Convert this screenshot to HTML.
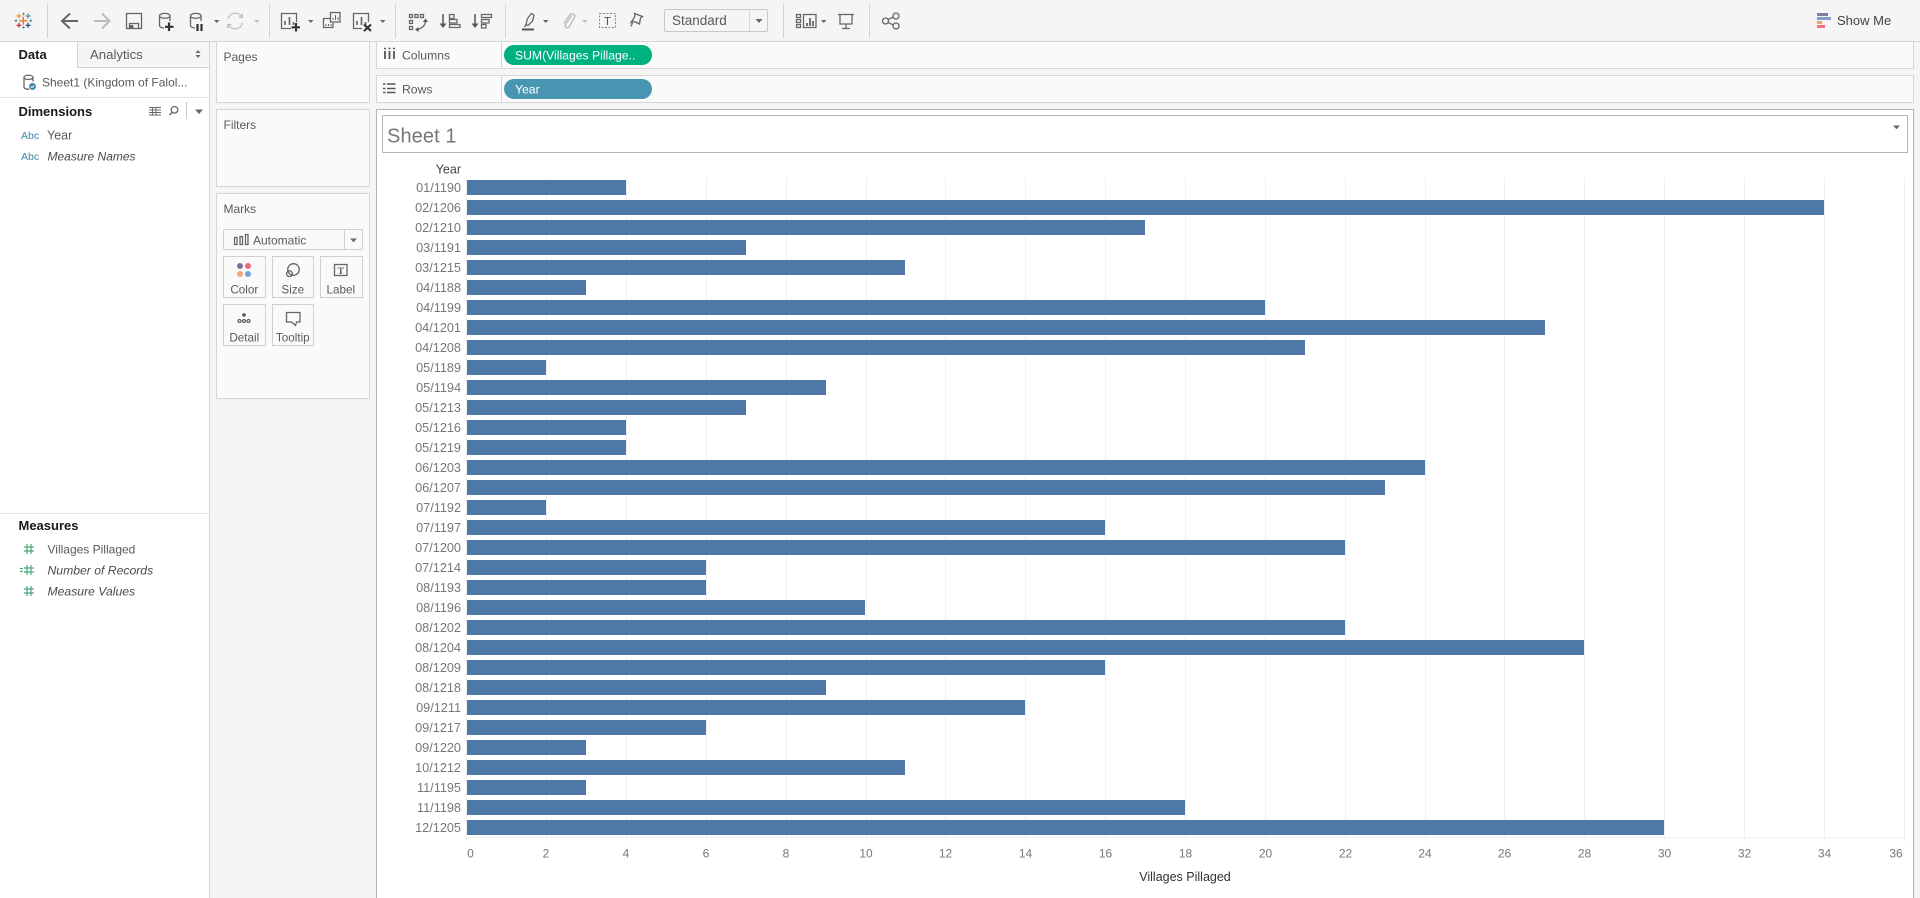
<!DOCTYPE html>
<html><head><meta charset="utf-8"><title>Sheet 1</title>
<style>
html,body{margin:0;padding:0;background:#f5f5f5;overflow:hidden}
svg{display:block;position:absolute;left:0;top:0}
text{font-family:"Liberation Sans",sans-serif;font-size:12.2px;fill:#5a5a5a}
.r{text-anchor:end;fill:#777;font-size:12.7px}
.m{text-anchor:middle}
.a{text-anchor:middle;fill:#777;font-size:12px}
.i{font-style:italic;fill:#4a4a4a}
.b{font-weight:bold;fill:#1a1a1a}
.abc{font-size:10.5px;fill:#3f87a5}
.w{fill:#fff}
.ic{fill:none;stroke:#666;stroke-width:1.3}
.lt{fill:none;stroke:#bbb;stroke-width:1.3}
.card{fill:#fafafa;stroke:#d6d6d6}
.bar rect{fill:#4e79a7}
</style></head><body>
<svg width="1920" height="898" viewBox="0 0 1920 898" xmlns="http://www.w3.org/2000/svg">
<rect width="1920" height="898" fill="#f5f5f5"/>
<!-- left panel -->
<rect x="0" y="41" width="209" height="857" fill="#fff"/>
<path d="M0 41.5H1920" stroke="#d4d4d4"/>
<path d="M209.5 41V898" stroke="#d4d4d4"/>
<rect x="78" y="42" width="131" height="25" fill="#f5f5f5"/>
<path d="M77.5 41V67.5H209" stroke="#d4d4d4" fill="none"/>
<path d="M0 97.5H209M0 513.5H209" stroke="#e2e2e2"/>
<text x="18.500" y="59" class="b" style="font-size:13px">Data</text>
<text x="90" y="59" style="font-size:13.200px">Analytics</text>
<path d="M195.500 53l2.500-3 2.500 3zM195.500 55l2.500 3 2.500-3z" fill="#666"/>
<!-- data source -->
<path class="ic" d="M24 77.500c0-3 9-3 9 0v4M24 77.500c0 2.500 9 2.500 9 0M24 77.500V87c0 1.500 2.500 2.300 5 2.300"/>
<circle cx="32.500" cy="86.500" r="3.500" fill="#3f87a5"/>
<path d="M30.800 86.500l1.200 1.200 2-2.200" stroke="#fff" fill="none"/>
<text x="42" y="86.500" style="font-size:12px">Sheet1 (Kingdom of Falol...</text>
<!-- dimensions -->
<text x="18.500" y="116" class="b" style="font-size:13px">Dimensions</text>
<path d="M149 107.500h12M149 110h12M149 112.500h12M149 115h12M152.500 107v8.500M156 107v8.500" stroke="#666" stroke-width="0.900" fill="none"/>
<circle cx="174.500" cy="109.800" r="3.300" class="ic" stroke-width="1"/><path d="M172 112.500l-2.500 2.500" class="ic"/>
<path d="M186.500 102v17" stroke="#ccc"/>
<path d="M195 109.500h8l-4 4.500z" fill="#666"/>
<text x="21" y="139" class="abc">Abc</text>
<text x="47" y="139.500" style="font-size:12.500px">Year</text>
<text x="21" y="160" class="abc">Abc</text>
<text x="47.500" y="160.500" class="i" style="font-size:12px">Measure Names</text>
<!-- measures -->
<text x="18.500" y="530" class="b" style="font-size:13px">Measures</text>
<g stroke="#4ea77e" stroke-width="1.200" fill="none">
<path d="M27 544v10M31 544v10M24 547h10M24 551h10"/>
<path d="M27 565v10M31 565v10M24 568h10M24 572h10M20 568.500h3M20 571.500h3"/>
<path d="M27 586v10M31 586v10M24 589h10M24 593h10"/>
</g>
<text x="47.500" y="553.500" style="font-size:12px">Villages Pillaged</text>
<text x="47.500" y="574.500" class="i">Number of Records</text>
<text x="47.500" y="595.500" class="i">Measure Values</text>
<!-- cards -->
<rect class="card" x="216.500" y="41.500" width="153" height="61"/>
<rect class="card" x="216.500" y="109.500" width="153" height="77"/>
<rect class="card" x="216.500" y="193.500" width="153" height="205"/>
<text x="223.500" y="61" style="font-size:12px">Pages</text>
<text x="223.500" y="129" style="font-size:12px">Filters</text>
<text x="223.500" y="213" style="font-size:12px">Marks</text>
<!-- marks -->
<rect x="223.500" y="229.500" width="139" height="20" rx="1.500" fill="#fafafa" stroke="#d0d0d0"/>
<path d="M344.500 230v19" stroke="#d0d0d0"/>
<path class="ic" d="M234.500 237.500h2.500v7h-2.500zM240 236.500h2.500v8H240zM245.500 234.500h2.500v10h-2.500z" stroke-width="1"/>
<text x="253" y="244.500" style="font-size:12px">Automatic</text>
<path d="M350 238.500h7l-3.500 3.800z" fill="#666"/>
<g fill="#fafafa" stroke="#d0d0d0">
<rect x="223.500" y="256.500" width="42" height="41"/><rect x="272.500" y="256.500" width="41" height="41"/><rect x="320.500" y="256.500" width="42" height="41"/>
<rect x="223.500" y="304.500" width="42" height="41"/><rect x="272.500" y="304.500" width="41" height="41"/>
</g>
<circle cx="240" cy="266" r="3" fill="#84709c"/><circle cx="248" cy="266" r="3" fill="#f0687c"/>
<circle cx="240" cy="274" r="3" fill="#f0a77a"/><circle cx="248" cy="274" r="3" fill="#7a9fd0"/>
<circle cx="293.500" cy="269.500" r="5.800" class="ic" stroke-width="1"/><circle cx="289.500" cy="273.700" r="2.900" class="ic" fill="#fafafa" stroke-width="1"/>
<rect x="334.500" y="264.500" width="12.500" height="11" class="ic" stroke-width="1"/>
<text x="340.800" y="274" class="m" style="font-size:9.500px;font-family:'Liberation Serif',serif;font-weight:bold">T</text>
<text x="244.300" y="293.500" class="m" style="font-size:11.700px">Color</text>
<text x="292.800" y="293.500" class="m" style="font-size:11.700px">Size</text>
<text x="340.800" y="293.500" class="m" style="font-size:11.700px">Label</text>
<circle cx="244" cy="315" r="1.800" fill="#555"/>
<g class="ic" stroke-width="0.900"><circle cx="239.500" cy="321" r="1.500"/><circle cx="244" cy="321" r="1.500"/><circle cx="248.500" cy="321" r="1.500"/></g>
<path class="ic" stroke-width="1" d="M286.500 312.500h13.500v9.500h-3.500l-1 3.500-4-3.500h-5z"/>
<text x="244.300" y="341.500" class="m" style="font-size:11.700px">Detail</text>
<text x="292.800" y="341.500" class="m" style="font-size:11.700px">Tooltip</text>
<!-- shelves -->
<rect class="card" x="376.500" y="41.500" width="1537" height="27"/>
<rect class="card" x="376.500" y="75.500" width="1537" height="27"/>
<path d="M501.500 42v26M501.500 76v26" stroke="#d6d6d6"/>
<path d="M385 51v8M389.500 51v8M394 51v8" stroke="#555" stroke-width="1.800"/>
<path d="M384 48.500h2M388.500 48.500h2M393 48.500h2" stroke="#555" stroke-width="1.500"/>
<path d="M383 84h2.500M383 88.500h2.500M383 92.500h2.500M387 84h8.500M387 88.500h8.500M387 92.500h8.500" stroke="#555" stroke-width="1.400"/>
<text x="402" y="59.500">Columns</text>
<text x="402" y="93.500">Rows</text>
<rect x="504" y="45" width="148" height="20" rx="10" fill="#00b180"/>
<rect x="504" y="79" width="148" height="20" rx="10" fill="#4996b2"/>
<text x="515" y="59.500" class="w" style="font-size:12.200px">SUM(Villages Pillage..</text>
<text x="515" y="93.500" class="w" style="font-size:12.200px">Year</text>
<!-- viz -->
<rect x="376.500" y="109.500" width="1537" height="800" fill="#fff" stroke="#b4b4b4"/>
<rect x="382.500" y="115.500" width="1525" height="37" fill="#fff" stroke="#b4b4b4"/>
<text x="387" y="142.500" style="font-size:20px;fill:#777;letter-spacing:.1px">Sheet 1</text>
<path d="M1893 125.500h7l-3.500 3.800z" fill="#666"/>
<text x="461" y="173.500" class="r" style="fill:#444;font-size:12.500px">Year</text>
<!-- grid -->
<path d="M466.500 177V841M546.500 177V841M626.500 177V841M706.500 177V841M786.500 177V841M866.500 177V841M945.500 177V841M1025.500 177V841M1105.500 177V841M1185.500 177V841M1265.500 177V841M1345.500 177V841M1425.500 177V841M1504.500 177V841M1584.500 177V841M1664.500 177V841M1744.500 177V841M1824.500 177V841M1904.500 177V841" stroke="#f0f0f0" fill="none"/>
<path d="M466 837.500H1905" stroke="#f0f0f0"/>
<g class="bar">
<rect x="467" y="180" width="159" height="15"/><rect x="467" y="200" width="1357" height="15"/><rect x="467" y="220" width="678" height="15"/><rect x="467" y="240" width="279" height="15"/><rect x="467" y="260" width="438" height="15"/><rect x="467" y="280" width="119" height="15"/><rect x="467" y="300" width="798" height="15"/><rect x="467" y="320" width="1078" height="15"/><rect x="467" y="340" width="838" height="15"/><rect x="467" y="360" width="79" height="15"/><rect x="467" y="380" width="359" height="15"/><rect x="467" y="400" width="279" height="15"/><rect x="467" y="420" width="159" height="15"/><rect x="467" y="440" width="159" height="15"/><rect x="467" y="460" width="958" height="15"/><rect x="467" y="480" width="918" height="15"/><rect x="467" y="500" width="79" height="15"/><rect x="467" y="520" width="638" height="15"/><rect x="467" y="540" width="878" height="15"/><rect x="467" y="560" width="239" height="15"/><rect x="467" y="580" width="239" height="15"/><rect x="467" y="600" width="398" height="15"/><rect x="467" y="620" width="878" height="15"/><rect x="467" y="640" width="1117" height="15"/><rect x="467" y="660" width="638" height="15"/><rect x="467" y="680" width="359" height="15"/><rect x="467" y="700" width="558" height="15"/><rect x="467" y="720" width="239" height="15"/><rect x="467" y="740" width="119" height="15"/><rect x="467" y="760" width="438" height="15"/><rect x="467" y="780" width="119" height="15"/><rect x="467" y="800" width="718" height="15"/><rect x="467" y="820" width="1197" height="15"/>
</g>
<g>
<text x="461" y="192" class="r">01/1190</text><text x="461" y="212" class="r">02/1206</text><text x="461" y="232" class="r">02/1210</text><text x="461" y="252" class="r">03/1191</text><text x="461" y="272" class="r">03/1215</text><text x="461" y="292" class="r">04/1188</text><text x="461" y="312" class="r">04/1199</text><text x="461" y="332" class="r">04/1201</text><text x="461" y="352" class="r">04/1208</text><text x="461" y="372" class="r">05/1189</text><text x="461" y="392" class="r">05/1194</text><text x="461" y="412" class="r">05/1213</text><text x="461" y="432" class="r">05/1216</text><text x="461" y="452" class="r">05/1219</text><text x="461" y="472" class="r">06/1203</text><text x="461" y="492" class="r">06/1207</text><text x="461" y="512" class="r">07/1192</text><text x="461" y="532" class="r">07/1197</text><text x="461" y="552" class="r">07/1200</text><text x="461" y="572" class="r">07/1214</text><text x="461" y="592" class="r">08/1193</text><text x="461" y="612" class="r">08/1196</text><text x="461" y="632" class="r">08/1202</text><text x="461" y="652" class="r">08/1204</text><text x="461" y="672" class="r">08/1209</text><text x="461" y="692" class="r">08/1218</text><text x="461" y="712" class="r">09/1211</text><text x="461" y="732" class="r">09/1217</text><text x="461" y="752" class="r">09/1220</text><text x="461" y="772" class="r">10/1212</text><text x="461" y="792" class="r">11/1195</text><text x="461" y="812" class="r">11/1198</text><text x="461" y="832" class="r">12/1205</text>
</g>
<g>
<text x="470.500" y="857.500" class="a">0</text><text x="546" y="857.500" class="a">2</text><text x="626" y="857.500" class="a">4</text><text x="706" y="857.500" class="a">6</text><text x="786" y="857.500" class="a">8</text><text x="866" y="857.500" class="a">10</text><text x="945.500" y="857.500" class="a">12</text><text x="1025.500" y="857.500" class="a">14</text><text x="1105.500" y="857.500" class="a">16</text><text x="1185.500" y="857.500" class="a">18</text><text x="1265.500" y="857.500" class="a">20</text><text x="1345.500" y="857.500" class="a">22</text><text x="1425" y="857.500" class="a">24</text><text x="1504.500" y="857.500" class="a">26</text><text x="1584.500" y="857.500" class="a">28</text><text x="1664.500" y="857.500" class="a">30</text><text x="1744.500" y="857.500" class="a">32</text><text x="1824.500" y="857.500" class="a">34</text><text x="1896" y="857.500" class="a">36</text>
</g>
<text x="1185" y="881" class="m" style="font-size:12.500px;fill:#333">Villages Pillaged</text>
<!-- toolbar separators -->
<path d="M47.500 4V38M269.500 4V38M395.500 4V38M505.500 4V38M783.500 4V38M869.500 4V38" stroke="#d4d4d4"/>
<!-- logo -->
<g fill="none">
<path d="M23.300 16.800v8M19.300 20.800h8" stroke="#e8762b" stroke-width="1.400"/>
<path d="M19 13.500v5M16.500 16h5" stroke="#f28e2b" stroke-width="1.200"/>
<path d="M28 13.500v5M25.500 16h5" stroke="#5b879b" stroke-width="1.200"/>
<path d="M19 22.800v5M16.500 25.300h5" stroke="#c72037" stroke-width="1.200"/>
<path d="M28 22.800v5M25.500 25.300h5" stroke="#1f447e" stroke-width="1.200"/>
<path d="M23.500 12.500v3M22 14h3" stroke="#7099a6"/>
<path d="M23.500 26v3M22 27.500h3" stroke="#7099a6"/>
<path d="M16 19.300v3M14.500 20.800h3" stroke="#59879b"/>
<path d="M30.800 19.300v3M29.300 20.800h3" stroke="#59879b"/>
</g>
<!-- back / forward -->
<path d="M62 21H78M70 13.500L62 21l8 7.500" fill="none" stroke="#666" stroke-width="2"/>
<path d="M94 21H110M102 13.500l7.500 7.500-7.500 7.500" fill="none" stroke="#bbb" stroke-width="2"/>
<!-- save -->
<rect x="126.500" y="13.500" width="15" height="15" class="ic"/>
<path d="M129.500 28.500v-5h9v5" class="ic"/><rect x="130" y="25" width="3.500" height="3.500" fill="#666"/>
<!-- new data source -->
<path class="ic" d="M159.500 16c0-3.500 10.500-3.500 10.500 0v5M159.500 16c0 3 10.500 3 10.500 0M159.500 16v9.500c0 1.500 2 2.300 4.500 2.500"/>
<path d="M169 22.500v8.500M165 26.800h8.500" stroke="#333" stroke-width="2.200"/>
<!-- pause -->
<path class="ic" d="M190.500 16c0-3.500 10.500-3.500 10.500 0v5M190.500 16c0 3 10.500 3 10.500 0M190.500 16v9.500c0 1.500 2 2.300 4.500 2.500"/>
<path d="M197.500 24v7M201.500 24v7" stroke="#333" stroke-width="2.200"/>
<path d="M214 20h5.500l-2.750 3z" fill="#666"/>
<!-- refresh -->
<path d="M228 19a7.500 7.500 0 0 1 13.500-2.500M242.500 23a7.500 7.500 0 0 1-13.500 2.500" fill="none" stroke="#c4c4c4" stroke-width="1.400"/>
<path d="M243 13v5h-5zM227 29v-5h5z" fill="#c4c4c4"/>
<path d="M254 20h5.500l-2.750 3z" fill="#bbb"/>
<!-- new worksheet -->
<path class="ic" d="M296.500 22V13.500H281.500V28.500H291"/>
<path d="M285 25v-4M289.500 25v-8M293.500 25v-3" stroke="#666" stroke-width="1.700"/>
<path d="M296 23v8.500M291.500 27.300h8.500" stroke="#333" stroke-width="2.200"/>
<path d="M308 20h5.500l-2.750 3z" fill="#666"/>
<!-- duplicate -->
<path class="ic" d="M330 18.500h-6.500V27.500H333V23"/>
<rect x="330.500" y="12.500" width="9.500" height="9.500" class="ic" fill="#f5f5f5"/>
<path d="M333 20v-2M335.500 20v-5M338 20v-3M326 26v-2M328.500 26v-2M331 26v-2" stroke="#666"/>
<!-- clear -->
<path class="ic" d="M368.500 22V13.500H353.500V28.500H362"/>
<path d="M357 25v-4M361.500 25v-8M365.500 25v-3" stroke="#666" stroke-width="1.700"/>
<path d="M364 24.500l7 6.500M371 24.500l-7 6.500" stroke="#333" stroke-width="2.200"/>
<path d="M380 20h5.500l-2.750 3z" fill="#666"/>
<!-- swap -->
<path class="ic" stroke-width="1" d="M409.500 14.500h3v3h-3zM415 14.500h3v3h-3zM420.500 14.500h3v3h-3zM409.500 20.500h3v3h-3zM409.500 26.500h3v3h-3z"/>
<path class="ic" d="M425.500 20.500c0 4.500-3 8-8.500 9"/>
<path d="M415 29.500l3.500-2.500v5zM425.500 18.500l-2.500 3.500h5z" fill="#555"/>
<!-- sort asc -->
<path d="M443 14v12" stroke="#555" stroke-width="1.500"/><path d="M439.500 23.500l3.500 4.500 3.500-4.500z" fill="#555"/>
<path class="ic" stroke-width="1" d="M449.500 14.500h4.500v4h-4.500zM449.500 19.500h7.500v3.500h-7.500zM449.500 24.500h10.500v3h-10.500z"/>
<!-- sort desc -->
<path d="M475 14v12" stroke="#555" stroke-width="1.500"/><path d="M471.500 23.500l3.500 4.500 3.500-4.500z" fill="#555"/>
<path class="ic" stroke-width="1" d="M481.500 14.500h10v3h-10zM481.500 19.500h7.500v3.500h-7.500zM481.500 24.500h4.500v3.500h-4.500z"/>
<!-- highlighter -->
<path class="ic" d="M526 24.500l1.500-6 4-5 2.500 1.500-1.500 6-4.500 4.500zM524.500 27l1.500-2.500"/>
<path d="M522 29.500h12" stroke="#555" stroke-width="2"/>
<path d="M543 20h5.500l-2.750 3z" fill="#666"/>
<!-- clip -->
<path class="lt" stroke-width="1.500" d="M572 15l-6.500 9.500c-1.500 2.500 2 4.500 3.500 2.500l5.500-9.500c1.500-3-2.500-5.500-4.500-3l-6 9"/>
<path d="M582 20h5.500l-2.750 3z" fill="#bbb"/>
<!-- T box -->
<rect x="599.500" y="13.500" width="16" height="14" fill="none" stroke="#888" stroke-dasharray="2 1.500"/>
<text x="607.500" y="25" class="m" style="font-size:12px;font-family:'Liberation Mono',monospace;fill:#555">T</text>
<!-- pin -->
<path class="ic" d="M634.500 13.500l8 3-2 1.500-1 6-2-1-3.500-1.500-3 1 3-4.500 1-2.500zM632.500 23l-1.500 3.500"/>
<!-- standard -->
<rect x="664.500" y="9.500" width="103" height="22" rx="1.500" fill="#f5f5f5" stroke="#c8c8c8"/>
<path d="M749.500 10v21" stroke="#d8d8d8"/>
<text x="672" y="25" style="font-size:13.500px">Standard</text>
<path d="M755.500 19h7l-3.500 4z" fill="#666"/>
<!-- fit -->
<path class="ic" stroke-width="1" d="M796.500 14.500h4v3h-4zM796.500 19.500h4v3h-4zM796.500 24.500h4v3h-4zM803.500 14.500h12.500v13h-12.500z"/>
<path d="M807 26v-3M810 26v-8M813 26v-5" stroke="#555" stroke-width="1.600"/>
<path d="M821 20h5.500l-2.750 3z" fill="#666"/>
<!-- presentation -->
<path class="ic" d="M838 14.500h16M840 14.500v9.500h12V14.500M846 24v4M842 28.500h8"/>
<!-- share -->
<g class="ic"><circle cx="885.500" cy="21" r="3"/><circle cx="896" cy="16" r="3"/><circle cx="896" cy="26" r="3"/><path d="M888 19.500l5.500-2.500M888 22.500l5.500 2.500"/></g>
<!-- show me -->
<rect x="1817" y="13" width="11" height="3" fill="#8a7aa0"/>
<rect x="1817" y="17" width="14" height="3" fill="#7f9ec9"/>
<rect x="1817" y="21" width="5" height="3" fill="#f0a070"/>
<rect x="1817" y="25" width="8" height="3" fill="#f4707f"/>
<text x="1837" y="25" style="font-size:13px;fill:#444">Show Me</text>
</svg>
</body></html>
